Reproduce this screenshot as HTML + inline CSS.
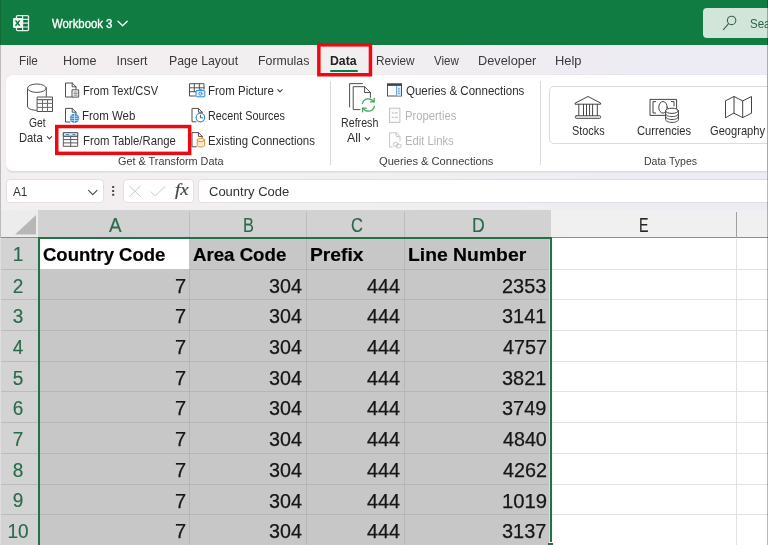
<!DOCTYPE html>
<html><head><meta charset="utf-8"><title>Excel - Workbook 3</title>
<style>
*{box-sizing:border-box;margin:0;padding:0}
html,body{width:768px;height:545px;overflow:hidden;background:#fff;font-family:"Liberation Sans",sans-serif;}
#root{position:relative;width:768px;height:545px;overflow:hidden;background:#f2eef1}
.a{position:absolute}
.t{position:absolute;white-space:nowrap;line-height:1;color:#333;transform-origin:0 0}
.tab{color:#3a3a3a}
.rl{color:#2e2e2e}
.gl{color:#3c3c3c}
.dis{color:#b4b4b4}
.ch{color:#296a49;-webkit-text-stroke:0.15px #296a49}
.ch.e{color:#262626;-webkit-text-stroke:0.15px #262626}
.rhn{color:#296a49;-webkit-text-stroke:0.15px #296a49}
.num{color:#161616;-webkit-text-stroke:0.25px #161616}
.bold{font-weight:bold;color:#000;-webkit-text-stroke:0.2px #000}
svg{position:absolute;overflow:visible}
#txt{position:absolute;left:0;top:0;width:768px;height:545px;will-change:transform}

</style></head><body>
<div id="root">
<!-- title bar -->
<div class="a" style="left:0;top:0;width:768px;height:45px;background:#107c41"></div>
<div class="a" style="left:702.5px;top:7.5px;width:80px;height:30.5px;background:#d1e5d9;border-radius:4px"></div>
<!-- tab strip -->
<div class="a" style="left:0;top:45px;width:768px;height:165px;background:linear-gradient(90deg,#f3eef0 0%,#f2eff0 33%,#f0eef1 61%,#eeecf3 80%,#edebf3 100%)"></div>
<!-- ribbon -->
<div class="a" style="left:6px;top:75px;width:761px;height:95.5px;background:#fff;border-radius:7px 0 0 7px;box-shadow:0 1px 0 #dddbde,0 2px 0 #e6e4e7,0 0 0 0.5px rgba(0,0,0,.04)"></div>
<div class="a" style="left:330px;top:81px;width:1px;height:84px;background:#dadada"></div>
<div class="a" style="left:540px;top:81px;width:1px;height:84px;background:#dadada"></div>
<div class="a" style="left:549px;top:86px;width:230px;height:58px;border:1px solid #dcdcdc;border-radius:5px"></div>
<div class="a" style="left:330px;top:70px;width:28px;height:2px;background:#107c41;border-radius:1px"></div>
<!-- formula bar -->
<div class="a" style="left:6.5px;top:180px;width:96px;height:22px;background:#fff;border-radius:3.5px;box-shadow:0 0 0 1px rgba(0,0,0,.06)"></div>
<div class="a" style="left:124px;top:180px;width:69px;height:22px;background:#fff;border-radius:3.5px;box-shadow:0 0 0 1px rgba(0,0,0,.06)"></div>
<div class="a" style="left:198.5px;top:180px;width:580px;height:22px;background:#fff;border-radius:3.5px;box-shadow:0 0 0 1px rgba(0,0,0,.06)"></div>
<!-- sheet -->
<div class="a" style="left:0;top:210px;width:768px;height:335px;background:#fff"></div>
<!-- header row -->
<div class="a" style="left:0;top:210px;width:768px;height:28px;background:#f0f0f0;border-bottom:1px solid #8e8e8e"></div>
<div class="a" style="left:0;top:210px;width:38px;height:27px;background:#ececec"></div>
<div class="a" style="left:38px;top:210px;width:513px;height:28px;background:#d2d2d2"></div>
<!-- row header col -->
<div class="a" style="left:0;top:238px;width:38px;height:307px;background:#d3d3d3"></div>
<!-- selected range -->
<div class="a" style="left:40px;top:239px;width:509px;height:306px;background:#c7c7c7"></div>
<div class="a" style="left:40px;top:239px;width:149px;height:30px;background:#fff"></div>

<div class="a" style="left:0px;top:269px;width:38px;height:1px;background:#bcbcbc;"></div>
<div class="a" style="left:40px;top:269px;width:509px;height:1px;background:#b6b6b6;"></div>
<div class="a" style="left:552px;top:269px;width:216px;height:1px;background:#e2e2e2;"></div>
<div class="a" style="left:0px;top:299px;width:38px;height:1px;background:#bcbcbc;"></div>
<div class="a" style="left:40px;top:299px;width:509px;height:1px;background:#b6b6b6;"></div>
<div class="a" style="left:552px;top:299px;width:216px;height:1px;background:#e2e2e2;"></div>
<div class="a" style="left:0px;top:330px;width:38px;height:1px;background:#bcbcbc;"></div>
<div class="a" style="left:40px;top:330px;width:509px;height:1px;background:#b6b6b6;"></div>
<div class="a" style="left:552px;top:330px;width:216px;height:1px;background:#e2e2e2;"></div>
<div class="a" style="left:0px;top:361px;width:38px;height:1px;background:#bcbcbc;"></div>
<div class="a" style="left:40px;top:361px;width:509px;height:1px;background:#b6b6b6;"></div>
<div class="a" style="left:552px;top:361px;width:216px;height:1px;background:#e2e2e2;"></div>
<div class="a" style="left:0px;top:391px;width:38px;height:1px;background:#bcbcbc;"></div>
<div class="a" style="left:40px;top:391px;width:509px;height:1px;background:#b6b6b6;"></div>
<div class="a" style="left:552px;top:391px;width:216px;height:1px;background:#e2e2e2;"></div>
<div class="a" style="left:0px;top:422px;width:38px;height:1px;background:#bcbcbc;"></div>
<div class="a" style="left:40px;top:422px;width:509px;height:1px;background:#b6b6b6;"></div>
<div class="a" style="left:552px;top:422px;width:216px;height:1px;background:#e2e2e2;"></div>
<div class="a" style="left:0px;top:453px;width:38px;height:1px;background:#bcbcbc;"></div>
<div class="a" style="left:40px;top:453px;width:509px;height:1px;background:#b6b6b6;"></div>
<div class="a" style="left:552px;top:453px;width:216px;height:1px;background:#e2e2e2;"></div>
<div class="a" style="left:0px;top:484px;width:38px;height:1px;background:#bcbcbc;"></div>
<div class="a" style="left:40px;top:484px;width:509px;height:1px;background:#b6b6b6;"></div>
<div class="a" style="left:552px;top:484px;width:216px;height:1px;background:#e2e2e2;"></div>
<div class="a" style="left:0px;top:514px;width:38px;height:1px;background:#bcbcbc;"></div>
<div class="a" style="left:40px;top:514px;width:509px;height:1px;background:#b6b6b6;"></div>
<div class="a" style="left:552px;top:514px;width:216px;height:1px;background:#e2e2e2;"></div>
<div class="a" style="left:189px;top:239px;width:1px;height:306px;background:#b6b6b6;"></div>
<div class="a" style="left:189px;top:212px;width:1px;height:25px;background:#bdbdbd;"></div>
<div class="a" style="left:306px;top:239px;width:1px;height:306px;background:#b6b6b6;"></div>
<div class="a" style="left:306px;top:212px;width:1px;height:25px;background:#bdbdbd;"></div>
<div class="a" style="left:404px;top:239px;width:1px;height:306px;background:#b6b6b6;"></div>
<div class="a" style="left:404px;top:212px;width:1px;height:25px;background:#bdbdbd;"></div>
<div class="a" style="left:189px;top:239px;width:1px;height:30px;background:#c6c6c6;"></div>
<div class="a" style="left:40px;top:269px;width:149px;height:1px;background:#c6c6c6;"></div>
<div class="a" style="left:736px;top:239px;width:1px;height:306px;background:#e2e2e2;"></div>
<div class="a" style="left:736px;top:212px;width:1px;height:26px;background:#a0a0a0;"></div>
<div class="a" style="left:38px;top:237px;width:514px;height:2px;background:#217346;"></div>
<div class="a" style="left:38px;top:237px;width:2px;height:308px;background:#217346;"></div>
<div class="a" style="left:550px;top:237px;width:2px;height:305px;background:#217346;"></div>
<div class="a" style="left:548px;top:543px;width:5px;height:2px;background:#217346;"></div>
<div class="a" style="left:549px;top:239px;width:1px;height:303px;background:#dcdcdc;"></div>
<div class="a" style="left:767px;top:0px;width:1px;height:545px;background:rgba(0,0,0,.27);"></div>
<div class="a" style="left:0px;top:45px;width:1px;height:193px;background:#bcbabd;"></div>
<div class="a" style="left:0px;top:0px;width:1px;height:45px;background:rgba(0,0,0,.12);"></div>
<div class="a" style="left:0px;top:238px;width:1px;height:307px;background:#dedede;"></div>
<svg width="768" height="545" viewBox="0 0 768 545" style="left:0;top:0" fill="none" stroke-linecap="round" stroke-linejoin="round">
<!-- red highlight boxes -->
<rect x="318.85" y="44.85" width="51.6" height="29.9" stroke="#ec0a10" stroke-width="3.5" stroke-linejoin="miter"/>
<rect x="56.75" y="126.55" width="132.9" height="26.8" stroke="#ec0a10" stroke-width="3.5" stroke-linejoin="miter"/>
<!-- excel logo -->
<g>
<rect x="16.5" y="15.600" width="12" height="15" rx="1" fill="#0f7340" stroke="#e2f4e9" stroke-width="1.3"/>
<path d="M22.600 15.600V30.600M16.500 19.400H28.500M16.500 23.200H28.500M16.500 27H28.500" stroke="#e2f4e9" stroke-width="1.2"/>
<rect x="13" y="18.100" width="9.300" height="9.800" rx="0.8" fill="#eef8f1"/>
<path d="M15.500 20.400L19.700 25.700M19.700 20.400L15.500 25.700" stroke="#107c41" stroke-width="1.5" stroke-linecap="butt"/>
</g>
<!-- workbook chevron -->
<path d="M118 21.3L122.6 25.8L127.2 21.3" stroke="#fff" stroke-width="1.3"/>
<!-- search magnifier -->
<circle cx="731.6" cy="20.4" r="4.2" stroke="#3c634e" stroke-width="1.1"/>
<path d="M728.6 23.6L723.4 29.6" stroke="#3c634e" stroke-width="1.1"/>

<!-- Get Data: cylinder + table -->
<g stroke="#505050" stroke-width="1">
<path d="M27.5 88.2V106.2C27.5 108.4 31 110.2 36.5 110.3M46.3 88.2V96.5"/>
<ellipse cx="36.9" cy="88.2" rx="9.4" ry="4.2" fill="#fff"/>
<rect x="37.5" y="97" width="15" height="14.5" fill="#fff"/>
<path d="M37.5 99.6H52.5" stroke-width="1.2" stroke="#6a6a6a"/>
<path d="M37.5 103.4H52.5M37.5 107.4H52.5M42.5 99.5V111.5M47.5 99.5V111.5" stroke="#6a6a6a"/>
</g>
<path d="M47.2 136.6L49.4 138.8L51.6 136.6" stroke="#444" stroke-width="1.1"/>

<!-- From Text/CSV -->
<g stroke="#505050" stroke-width="1">
<path d="M72 97H65.5V83H72.2L76 86.8V89.3M72.2 83V86.8H76" fill="none"/>
<rect x="72.4" y="89.8" width="6.3" height="7.3" fill="#fff"/>
<path d="M74 92H77.2M74 93.6H77.2M74 95.2H77.2" stroke-width="0.8" stroke="#666"/>
</g>
<!-- From Web -->
<g stroke="#505050" stroke-width="1">
<path d="M70 122H65.5V108.4H72.2L76 112.2V114M72.2 108.4V112.2H76"/>
</g>
<circle cx="74.5" cy="118.3" r="4.6" fill="#2b88d8"/>
<path d="M70.4 118.3H78.6M74.5 114.2V122.4M71.6 116.2H77.4M71.6 120.4H77.4" stroke="#d6ebfb" stroke-width="0.8"/>
<!-- From Table/Range -->
<g stroke="#5a5a5a" stroke-width="1">
<rect x="63.7" y="132.7" width="14" height="13.6" fill="#fff"/>
<rect x="63.7" y="132.7" width="14" height="3.6" fill="#e6eef7"/>
<path d="M63.7 136.3H77.7M63.7 139.6H77.7M63.7 142.9H77.7M70.7 136.3V146.3"/>
</g>
<path d="M66.4 134.5H68.6M72.8 134.5H75" stroke="#3c8ad6" stroke-width="1.1"/>

<!-- From Picture -->
<g stroke="#505050" stroke-width="1">
<path d="M195 96H189.5V83.7H204V89.2M189.5 87.8H204M189.5 91.7H195.5M194.3 83.7V91.7M199.3 83.7V89"/>
</g>
<rect x="196" y="90.6" width="8.8" height="6.2" rx="0.8" fill="#e3f1fc" stroke="#2b88d8" stroke-width="1"/>
<path d="M198.6 90.4L199.3 89.4H201.6L202.3 90.4" stroke="#2b88d8" stroke-width="0.9"/>
<circle cx="200.4" cy="93.7" r="1.5" stroke="#2b88d8" stroke-width="0.9"/>
<path d="M277.8 89.6L280 91.8L282.2 89.6" stroke="#444" stroke-width="1.1"/>
<!-- Recent Sources -->
<g stroke="#505050" stroke-width="1">
<path d="M196 121.8H192V108.4H198.4L202.2 112.2V112.6M198.4 108.4V112.2H202.2"/>
</g>
<circle cx="200.4" cy="117.6" r="4.3" fill="#fff" stroke="#2b88d8" stroke-width="1.1"/>
<path d="M200.4 115.2V117.8H202.6" stroke="#444" stroke-width="0.9"/>
<!-- Existing Connections -->
<g stroke="#505050" stroke-width="1">
<path d="M196.4 146.8H192V132.6H198.4L202.2 136.4V137.5M198.4 132.6V136.4H202.2"/>
</g>
<path d="M197.2 140V145.4C197.2 146.3 198.8 147 200.9 147C203 147 204.6 146.3 204.6 145.4V140" fill="#fdebd6" stroke="#e8912d" stroke-width="1"/>
<ellipse cx="200.9" cy="140" rx="3.7" ry="1.6" fill="#fdebd6" stroke="#e8912d" stroke-width="1"/>

<!-- Refresh All -->
<g stroke="#505050" stroke-width="1">
<path d="M349.6 107V83.6H362.4"/>
<path d="M360 109.6H353.2V86.7H364.6L370.4 92.5V97.5M364.6 86.7V92.5H370.4"/>
</g>
<g stroke="#41a85a" stroke-width="1.3">
<circle cx="368.4" cy="105" r="7.6" fill="#fff" stroke="none"/>
<path d="M362.4 103.6A6.2 6.2 0 0 1 373.6 101.600"/>
<path d="M374.4 106.4A6.2 6.2 0 0 1 363.2 108.400"/>
<path d="M374.2 98.2V101.900H370.500"/>
<path d="M362.600 111.800V108.100H366.300"/>
</g>
<path d="M365.2 137.6L367.4 139.8L369.6 137.6" stroke="#444" stroke-width="1.1"/>

<!-- Queries & Connections icon -->
<g stroke-linejoin="miter" stroke-linecap="butt">
<rect x="387.500" y="84" width="14" height="12" fill="#fff" stroke="#555" stroke-width="1"/>
<rect x="396.800" y="86.200" width="4.200" height="9.300" fill="#d7ebfb" stroke="none"/>
<path d="M387 84.700H402" stroke="#444" stroke-width="2.400"/>
<path d="M396.500 86V96" stroke="#5aa0dc" stroke-width="0.900"/>
<path d="M398.900 88.300V89.500M398.900 90.500V91.700M398.900 92.700V93.900" stroke="#2b88d8" stroke-width="1.200"/>
</g>
<!-- Properties icon (disabled) -->
<g stroke="#c2c2c2" stroke-width="1" stroke-linejoin="miter" stroke-linecap="butt">
<rect x="389.500" y="108.200" width="10.400" height="14.200" fill="#fbfbfb"/>
<path d="M391.800 112.800H393.600M394.800 112.800H397.600M391.800 117.400H393.600M394.800 117.400H397.600" stroke-width="1.300"/>
</g>
<!-- Edit Links icon (disabled) -->
<g stroke="#c6c6c6" stroke-width="1">
<path d="M392.4 147H389.6V132.8H396.2L400 136.6V141M396.2 132.8V136.6H400"/>
<rect x="393.2" y="142.6" width="5" height="3.6" rx="1.6"/>
<rect x="396.2" y="144.2" width="5" height="3.6" rx="1.6"/>
</g>

<!-- Stocks (bank) -->
<g stroke="#444" stroke-width="1">
<path d="M575.4 103L588 96.5L600.6 103V104.2H575.4Z"/>
<path d="M578.8 104.4V115.6M583.5 104.4V115.6M586.5 104.4V115.6M589.6 104.4V115.6M592.6 104.4V115.6M597.3 104.4V115.6"/>
<rect x="575.4" y="115.8" width="25.2" height="2.5" rx="0.8"/>
</g>
<!-- Currencies -->
<g stroke="#444" stroke-width="1">
<rect x="650.4" y="99.4" width="26.2" height="16"/>
<path d="M655.6 101.6H653V113H655.6M671.4 101.6H674V106"/>
<ellipse cx="663" cy="107.3" rx="4.2" ry="5.8"/>
<path d="M665.6 110.8V119.6C665.6 121.2 668.4 122.4 672 122.4C675.600 122.4 678.4 121.2 678.4 119.600V110.8" fill="#fff"/>
<ellipse cx="672" cy="110.8" rx="6.4" ry="2.6" fill="#fff"/>
<path d="M665.6 113.8C665.6 115.400 668.4 116.600 672 116.600C675.600 116.600 678.400 115.400 678.400 113.800M665.600 116.700C665.600 118.300 668.400 119.500 672 119.500C675.600 119.500 678.400 118.300 678.400 116.700"/>
</g>
<!-- Geography (map) -->
<g stroke="#444" stroke-width="1">
<path d="M725.500 117.400V100.800L734 96.500L742.700 100.900L751.500 96.500V113.200L742.700 117.600L734 113.300Z"/>
<path d="M734 96.500V113.300M742.700 100.900V117.600"/>
</g>

<!-- name box chevron, dots, X, check -->
<path d="M88.600 190.400L92.800 194.600L97 190.400" stroke="#444" stroke-width="1.1"/>
<g fill="#444" stroke="none"><rect x="112.1" y="186" width="2.1" height="2.1" rx="0.5"/><rect x="112.1" y="189.900" width="2.1" height="2.1" rx="0.5"/><rect x="112.1" y="193.700" width="2.1" height="2.1" rx="0.5"/></g>
<path d="M129.600 186.200L140.400 196.400M140.400 186.200L129.600 196.400" stroke="#c8c8c8" stroke-width="1"/>
<path d="M151 191.800L155.200 196L165.200 186.400" stroke="#c8c8c8" stroke-width="1"/>
<!-- corner triangle -->
<path d="M36 215V234.600H15Z" fill="#b7b7b7" stroke="none"/>
</svg>

<div id="txt">
<div class="t " id="t0" style="font-size:12.4px;top:18.30px;left:52.12px;transform:scaleX(0.9174);color:#fff;-webkit-text-stroke:0.35px #fff">Workbook 3</div>
<div class="t " id="t1" style="font-size:12.4px;top:18.10px;left:749.73px;transform:scaleX(0.9300);color:#2a6646">Sea</div>
<div class="t tab" id="t2" style="font-size:12.4px;top:54.50px;left:19.05px;transform:scaleX(0.9459);">File</div>
<div class="t tab" id="t3" style="font-size:12.4px;top:54.50px;left:62.98px;transform:scaleX(1.0159);">Home</div>
<div class="t tab" id="t4" style="font-size:12.4px;top:54.50px;left:116.50px;">Insert</div>
<div class="t tab" id="t5" style="font-size:12.4px;top:54.50px;left:169.01px;transform:scaleX(0.9927);">Page Layout</div>
<div class="t tab" id="t6" style="font-size:12.4px;top:54.50px;left:258.00px;transform:scaleX(0.9950);">Formulas</div>
<div class="t tab" id="t7" style="font-size:12.4px;top:54.50px;left:376.06px;transform:scaleX(0.9497);">Review</div>
<div class="t tab" id="t8" style="font-size:12.4px;top:54.50px;left:434.00px;transform:scaleX(0.9346);">View</div>
<div class="t tab" id="t9" style="font-size:12.4px;top:54.50px;left:477.97px;transform:scaleX(1.0317);">Developer</div>
<div class="t tab" id="t10" style="font-size:12.4px;top:54.50px;left:554.96px;transform:scaleX(1.0417);">Help</div>
<div class="t tab" id="t11" style="font-size:12.4px;top:54.50px;left:329.51px;transform:scaleX(0.9905);font-weight:bold;color:#222">Data</div>
<div class="t rl" id="t12" style="font-size:12.1px;top:117.06px;left:28.78px;transform:scaleX(0.8507);">Get</div>
<div class="t rl" id="t13" style="font-size:12.1px;top:131.76px;left:19.31px;transform:scaleX(0.9287);">Data</div>
<div class="t rl" id="t14" style="font-size:12.1px;top:85.46px;left:82.90px;transform:scaleX(0.9179);">From Text/CSV</div>
<div class="t rl" id="t15" style="font-size:12.1px;top:110.46px;left:81.88px;transform:scaleX(0.9491);">From Web</div>
<div class="t rl" id="t16" style="font-size:12.1px;top:135.46px;left:82.89px;transform:scaleX(0.9352);">From Table/Range</div>
<div class="t rl" id="t17" style="font-size:12.1px;top:85.46px;left:207.94px;transform:scaleX(0.9506);">From Picture</div>
<div class="t rl" id="t18" style="font-size:12.1px;top:110.46px;left:208.00px;transform:scaleX(0.8926);">Recent Sources</div>
<div class="t rl" id="t19" style="font-size:12.1px;top:135.46px;left:207.95px;transform:scaleX(0.9471);">Existing Connections</div>
<div class="t rl" id="t20" style="font-size:12.1px;top:117.36px;left:340.93px;transform:scaleX(0.8822);">Refresh</div>
<div class="t rl" id="t21" style="font-size:12.1px;top:132.06px;left:347.00px;transform:scaleX(1.0314);">All</div>
<div class="t rl" id="t22" style="font-size:12.1px;top:85.46px;left:406.07px;transform:scaleX(0.9517);">Queries &amp; Connections</div>
<div class="t rl dis" id="t23" style="font-size:12.1px;top:110.46px;left:405.36px;transform:scaleX(0.9312);">Properties</div>
<div class="t rl dis" id="t24" style="font-size:12.1px;top:135.46px;left:405.36px;transform:scaleX(0.9294);">Edit Links</div>
<div class="t rl" id="t25" style="font-size:12.1px;top:124.76px;left:571.70px;transform:scaleX(0.8986);">Stocks</div>
<div class="t rl" id="t26" style="font-size:12.1px;top:124.76px;left:636.68px;transform:scaleX(0.9247);">Currencies</div>
<div class="t rl" id="t27" style="font-size:12.1px;top:124.76px;left:710.02px;transform:scaleX(0.9202);">Geography</div>
<div class="t gl" id="t28" style="font-size:10.6px;top:155.83px;left:117.99px;transform:scaleX(1.0244);">Get &amp; Transform Data</div>
<div class="t gl" id="t29" style="font-size:10.6px;top:155.83px;left:378.57px;transform:scaleX(1.0503);">Queries &amp; Connections</div>
<div class="t gl" id="t30" style="font-size:10.6px;top:155.83px;left:643.51px;transform:scaleX(0.9923);">Data Types</div>
<div class="t " id="t31" style="font-size:12px;top:185.84px;left:13.00px;transform:scaleX(0.9825);color:#333">A1</div>
<div class="t " id="t32" style="font-size:12px;top:185.84px;left:208.96px;transform:scaleX(1.0836);color:#333">Country Code</div>
<div class="t " id="t33" style="font-size:16px;top:181.96px;left:174.65px;transform:scaleX(1.1706);font-family:'Liberation Serif',serif;font-style:italic;color:#444;-webkit-text-stroke:0.2px #444">fx</div>
<div class="t ch" id="t34" style="font-size:20px;top:214.87px;left:109.00px;transform:scaleX(0.9408);">A</div>
<div class="t ch" id="t35" style="font-size:20px;top:214.87px;left:243.22px;transform:scaleX(0.8187);">B</div>
<div class="t ch" id="t36" style="font-size:20px;top:214.87px;left:351.43px;transform:scaleX(0.8235);">C</div>
<div class="t ch" id="t37" style="font-size:20px;top:214.87px;left:472.46px;transform:scaleX(0.8836);">D</div>
<div class="t ch e" id="t38" style="font-size:20px;top:214.87px;left:639.28px;transform:scaleX(0.7092);">E</div>
<div class="t rhn" id="t39" style="font-size:19.6px;top:245.01px;left:-31.80px;width:100px;text-align:center;transform:scaleX(0.9700);transform-origin:50% 0;">1</div>
<div class="t rhn" id="t40" style="font-size:19.6px;top:277.01px;left:-31.80px;width:100px;text-align:center;transform:scaleX(0.9700);transform-origin:50% 0;">2</div>
<div class="t rhn" id="t41" style="font-size:19.6px;top:307.11px;left:-31.80px;width:100px;text-align:center;transform:scaleX(0.9700);transform-origin:50% 0;">3</div>
<div class="t rhn" id="t42" style="font-size:19.6px;top:337.81px;left:-31.80px;width:100px;text-align:center;transform:scaleX(0.9700);transform-origin:50% 0;">4</div>
<div class="t rhn" id="t43" style="font-size:19.6px;top:368.51px;left:-31.80px;width:100px;text-align:center;transform:scaleX(0.9700);transform-origin:50% 0;">5</div>
<div class="t rhn" id="t44" style="font-size:19.6px;top:399.21px;left:-31.80px;width:100px;text-align:center;transform:scaleX(0.9700);transform-origin:50% 0;">6</div>
<div class="t rhn" id="t45" style="font-size:19.6px;top:429.91px;left:-31.80px;width:100px;text-align:center;transform:scaleX(0.9700);transform-origin:50% 0;">7</div>
<div class="t rhn" id="t46" style="font-size:19.6px;top:460.61px;left:-31.80px;width:100px;text-align:center;transform:scaleX(0.9700);transform-origin:50% 0;">8</div>
<div class="t rhn" id="t47" style="font-size:19.6px;top:491.31px;left:-31.80px;width:100px;text-align:center;transform:scaleX(0.9700);transform-origin:50% 0;">9</div>
<div class="t rhn" id="t48" style="font-size:19.6px;top:522.01px;left:-31.80px;width:100px;text-align:center;transform:scaleX(0.9700);transform-origin:50% 0;">10</div>
<div class="t bold" id="t49" style="font-size:18.6px;top:245.86px;left:43.00px;transform:scaleX(0.9959);">Country Code</div>
<div class="t bold" id="t50" style="font-size:18.6px;top:245.86px;left:192.50px;transform:scaleX(1.0027);">Area Code</div>
<div class="t bold" id="t51" style="font-size:18.6px;top:245.86px;left:309.97px;transform:scaleX(1.0345);">Prefix</div>
<div class="t bold" id="t52" style="font-size:18.6px;top:245.86px;left:407.96px;transform:scaleX(1.0400);">Line Number</div>
<div class="t num" id="t53" style="font-size:20.5px;top:276.25px;left:174.52px;transform:scaleX(0.9744);">7</div>
<div class="t num" id="t54" style="font-size:20.5px;top:276.25px;left:269.42px;transform:scaleX(0.9622);">304</div>
<div class="t num" id="t55" style="font-size:20.5px;top:276.25px;left:366.51px;transform:scaleX(0.9701);">444</div>
<div class="t num" id="t56" style="font-size:20.5px;top:276.25px;left:501.52px;transform:scaleX(0.9716);">2353</div>
<div class="t num" id="t57" style="font-size:20.5px;top:306.35px;left:174.52px;transform:scaleX(0.9744);">7</div>
<div class="t num" id="t58" style="font-size:20.5px;top:306.35px;left:269.42px;transform:scaleX(0.9622);">304</div>
<div class="t num" id="t59" style="font-size:20.5px;top:306.35px;left:366.51px;transform:scaleX(0.9701);">444</div>
<div class="t num" id="t60" style="font-size:20.5px;top:306.35px;left:502.01px;transform:scaleX(0.9718);">3141</div>
<div class="t num" id="t61" style="font-size:20.5px;top:337.05px;left:174.52px;transform:scaleX(0.9744);">7</div>
<div class="t num" id="t62" style="font-size:20.5px;top:337.05px;left:269.42px;transform:scaleX(0.9622);">304</div>
<div class="t num" id="t63" style="font-size:20.5px;top:337.05px;left:366.51px;transform:scaleX(0.9701);">444</div>
<div class="t num" id="t64" style="font-size:20.5px;top:337.05px;left:502.51px;transform:scaleX(0.9663);">4757</div>
<div class="t num" id="t65" style="font-size:20.5px;top:367.75px;left:174.52px;transform:scaleX(0.9744);">7</div>
<div class="t num" id="t66" style="font-size:20.5px;top:367.75px;left:269.42px;transform:scaleX(0.9622);">304</div>
<div class="t num" id="t67" style="font-size:20.5px;top:367.75px;left:366.51px;transform:scaleX(0.9701);">444</div>
<div class="t num" id="t68" style="font-size:20.5px;top:367.75px;left:502.01px;transform:scaleX(0.9718);">3821</div>
<div class="t num" id="t69" style="font-size:20.5px;top:398.45px;left:174.52px;transform:scaleX(0.9744);">7</div>
<div class="t num" id="t70" style="font-size:20.5px;top:398.45px;left:269.42px;transform:scaleX(0.9622);">304</div>
<div class="t num" id="t71" style="font-size:20.5px;top:398.45px;left:366.51px;transform:scaleX(0.9701);">444</div>
<div class="t num" id="t72" style="font-size:20.5px;top:398.45px;left:502.01px;transform:scaleX(0.9718);">3749</div>
<div class="t num" id="t73" style="font-size:20.5px;top:429.15px;left:174.52px;transform:scaleX(0.9744);">7</div>
<div class="t num" id="t74" style="font-size:20.5px;top:429.15px;left:269.42px;transform:scaleX(0.9622);">304</div>
<div class="t num" id="t75" style="font-size:20.5px;top:429.15px;left:366.51px;transform:scaleX(0.9701);">444</div>
<div class="t num" id="t76" style="font-size:20.5px;top:429.15px;left:502.51px;transform:scaleX(0.9609);">4840</div>
<div class="t num" id="t77" style="font-size:20.5px;top:459.85px;left:174.52px;transform:scaleX(0.9744);">7</div>
<div class="t num" id="t78" style="font-size:20.5px;top:459.85px;left:269.42px;transform:scaleX(0.9622);">304</div>
<div class="t num" id="t79" style="font-size:20.5px;top:459.85px;left:366.51px;transform:scaleX(0.9701);">444</div>
<div class="t num" id="t80" style="font-size:20.5px;top:459.85px;left:502.51px;transform:scaleX(0.9663);">4262</div>
<div class="t num" id="t81" style="font-size:20.5px;top:490.55px;left:174.52px;transform:scaleX(0.9744);">7</div>
<div class="t num" id="t82" style="font-size:20.5px;top:490.55px;left:269.42px;transform:scaleX(0.9622);">304</div>
<div class="t num" id="t83" style="font-size:20.5px;top:490.55px;left:366.51px;transform:scaleX(0.9701);">444</div>
<div class="t num" id="t84" style="font-size:20.5px;top:490.55px;left:501.51px;transform:scaleX(0.9885);">1019</div>
<div class="t num" id="t85" style="font-size:20.5px;top:521.25px;left:174.52px;transform:scaleX(0.9744);">7</div>
<div class="t num" id="t86" style="font-size:20.5px;top:521.25px;left:269.42px;transform:scaleX(0.9622);">304</div>
<div class="t num" id="t87" style="font-size:20.5px;top:521.25px;left:366.51px;transform:scaleX(0.9701);">444</div>
<div class="t num" id="t88" style="font-size:20.5px;top:521.25px;left:502.01px;transform:scaleX(0.9718);">3137</div>
</div>
</div>
</body></html>
